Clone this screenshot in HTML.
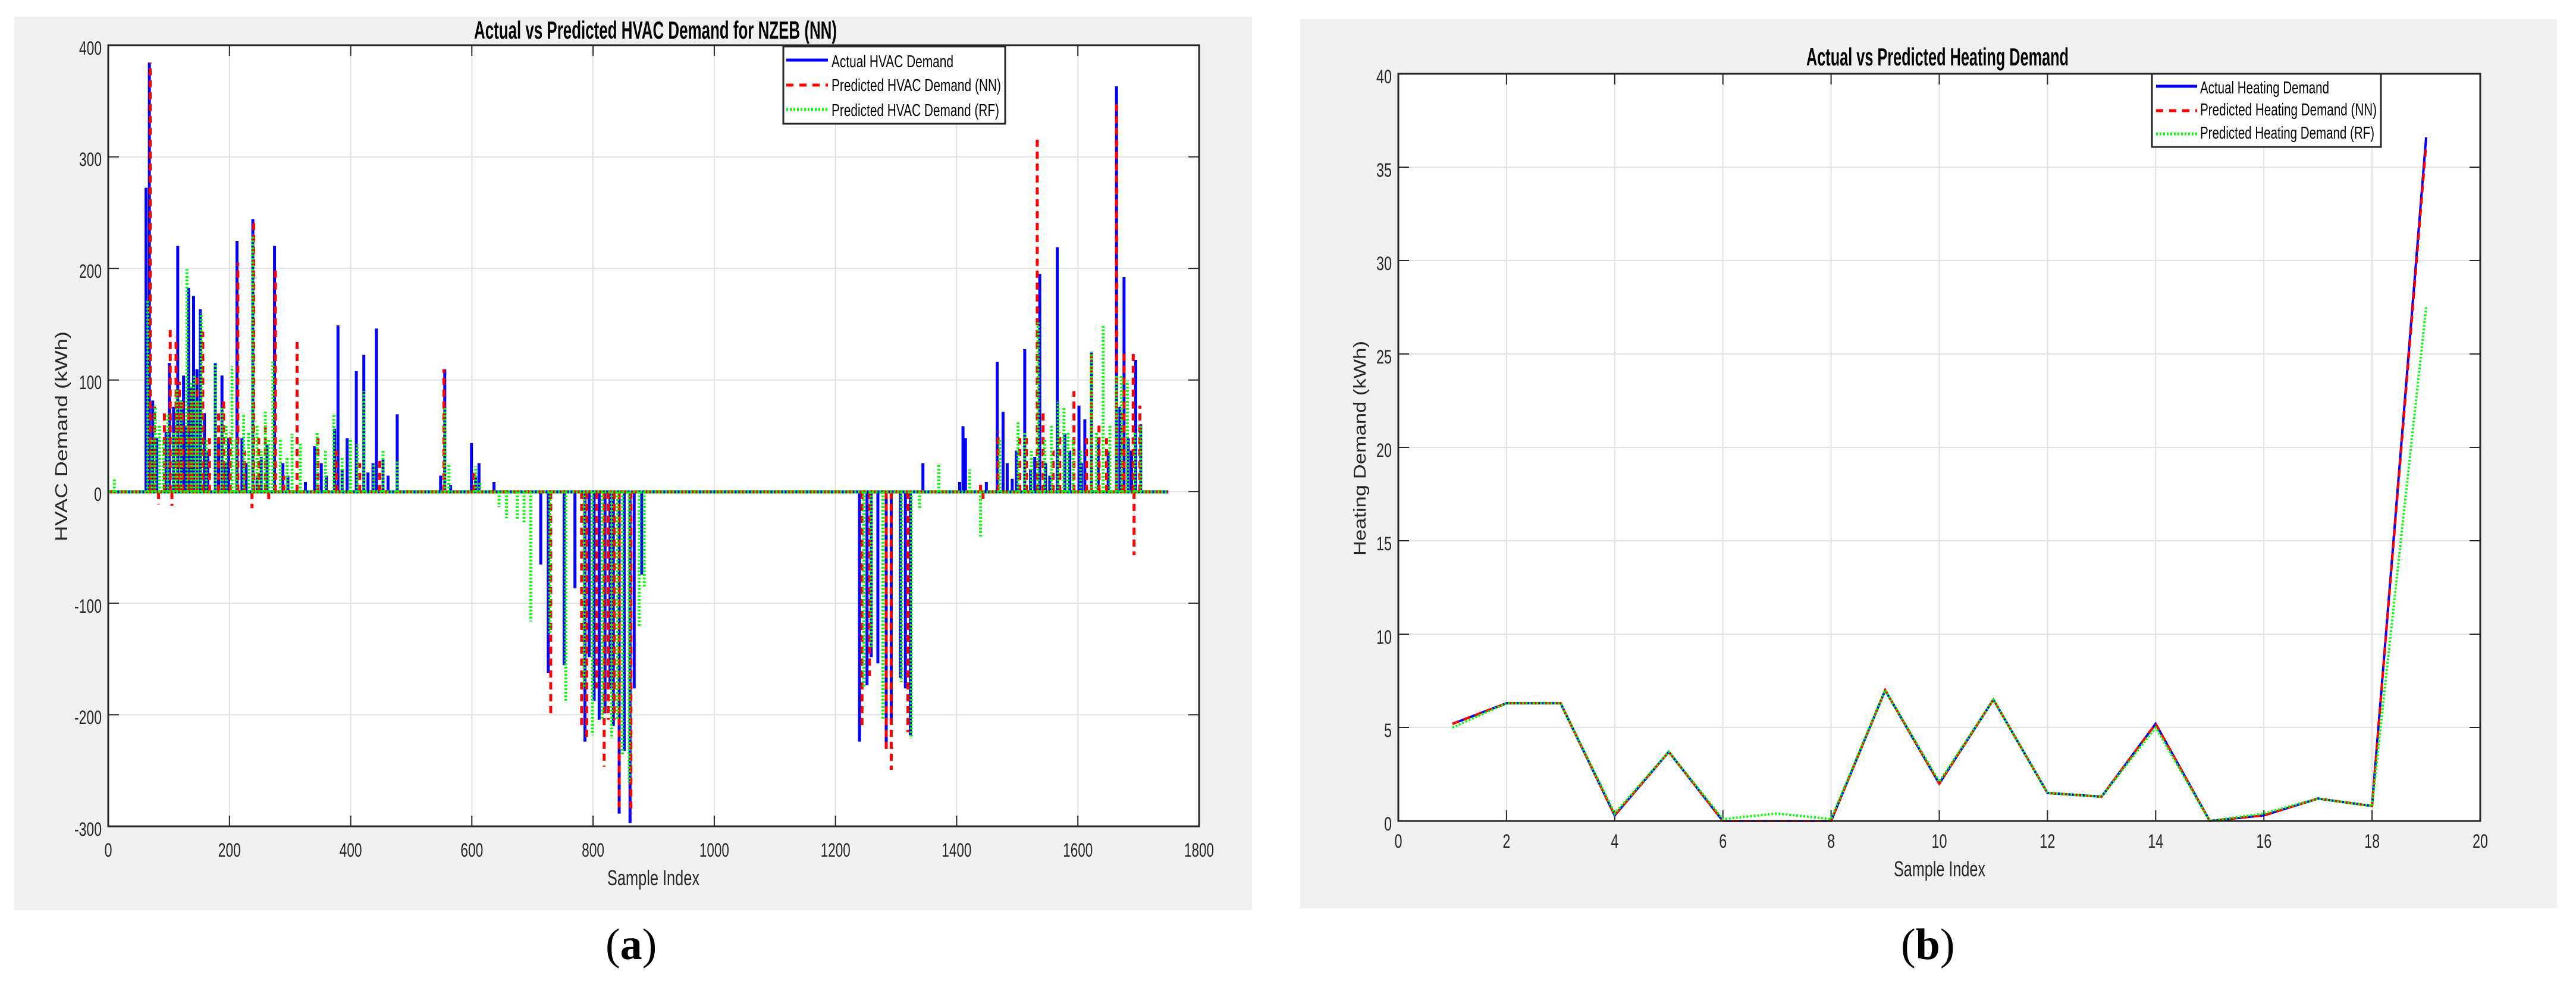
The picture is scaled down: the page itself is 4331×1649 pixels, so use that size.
<!DOCTYPE html>
<html><head><meta charset="utf-8"><style>
html,body{margin:0;padding:0;background:#fff;width:4331px;height:1649px;overflow:hidden}
svg{display:block}
text{font-family:"Liberation Sans",sans-serif;fill:#262626}
.t{font-size:32px}
.lg{font-size:29px;fill:#000}
.ti{font-size:42px;font-weight:bold;fill:#000}
.cap{font-family:"Liberation Serif",serif;font-size:74px;fill:#000}
</style></head><body>
<svg width="4331" height="1649" viewBox="0 0 4331 1649" xmlns="http://www.w3.org/2000/svg">
<!-- LEFT PANEL -->
<rect x="24" y="28" width="2081" height="1502" fill="#f0f0f0"/>
<rect x="182" y="76" width="1834" height="1313" fill="#fff"/>
<g stroke="#e2e2e2" stroke-width="2">
<path d="M385.8 76V1389M589.6 76V1389M793.3 76V1389M997.1 76V1389M1200.9 76V1389M1404.7 76V1389M1608.4 76V1389M1812.2 76V1389"/>
<path d="M182 263.6H2016M182 451.1H2016M182 638.7H2016M182 826.3H2016M182 1013.9H2016M182 1201.4H2016"/>
</g>
<g stroke="#262626" stroke-width="2">
<path d="M385.8 76v18M589.6 76v18M793.3 76v18M997.1 76v18M1200.9 76v18M1404.7 76v18M1608.4 76v18M1812.2 76v18"/>
<path d="M385.8 1389v-18M589.6 1389v-18M793.3 1389v-18M997.1 1389v-18M1200.9 1389v-18M1404.7 1389v-18M1608.4 1389v-18M1812.2 1389v-18"/>
<path d="M182 263.6h18M182 451.1h18M182 638.7h18M182 826.3h18M182 1013.9h18M182 1201.4h18"/>
<path d="M2016 263.6h-18M2016 451.1h-18M2016 638.7h-18M2016 826.3h-18M2016 1013.9h-18M2016 1201.4h-18"/>
</g>
<!-- left data (zoom coords) -->
<g transform="scale(1.403,1.052)" fill="none" stroke-linejoin="miter">
<path vector-effect="non-scaling-stroke" stroke="#0000ff" stroke-width="5" d="M130 786H1400
M175 786V300M179 786V100M213 786V393M226 786V460M232 786V473M240 786V494M258 786V580M266 786V600M284 786V385M303 786V350M329 786V393M405 786V520M427 786V593M436 786V567M451 786V525M476 786V662M533 786V590M565 786V708M574 786V740M1106 786V740M1154 786V681M1157 786V700M1195 786V578M1202 786V658M1213 786V765M1228 786V558M1246 786V438M1267 786V395M1276 786V693M1293 786V648M1300 786V670M1308 786V562M1338 786V138M1347 786V443M1361 786V575M1367 786V678M203 786V580M220 786V600M236 786V590M290 786V700M377 786V713M401 786V685M416 786V700M459 786V733
M183 786V640M188 786V700M199 786V690M208 786V650M217 786V640M222 786V680M229 786V620M245 786V660M249 786V720M262 786V700M270 786V740M274 786V700M295 786V740M308 786V760M313 786V730M320 786V710M339 786V740M345 786V760M366 786V770M385 786V740M391 786V760M410 786V750M441 786V755M447 786V740M465 786V760M528 786V760M540 786V775M570 786V760M592 786V770M1150 786V770M1182 786V770M1207 786V740M1218 786V720M1235 786V750M1240 786V730M1253 786V740M1258 786V760M1282 786V720M1296 786V740M1316 786V700M1328 786V720M1342 786V650M1352 786V700M1356 786V720
M648 786V902M657 786V1075M676 786V1063M689 786V940M701 786V1185M718 786V1150M742 786V1300M755 786V1315M769 786V918M1030 786V1185M1039 786V1095M1052 786V1060M1062 786V1195M1068 786V1155M1079 786V1083M1091 786V1175M712 786V1120M725 786V1140M735 786V1160M1044 786V1050M1085 786V1100M706 786V1050M731 786V1100M748 786V1200M760 786V1100"/>
<path vector-effect="non-scaling-stroke" stroke="#ff0000" stroke-width="5" stroke-dasharray="12 8" d="M130 786H1400
M180 786V100M204 786V520M211 786V538M243 786V530M285 786V420M304 786V355M330 786V425M356 786V545M532 786V590M1243 786V222M1338 786V165M1347 786V560M1287 786V625M1358 786V558M1366 786V648M215 786V610M230 786V620M268 786V640M318 786V680M1308 786V565M1196 786V690M1230 786V700
M185 786V650M197 786V660M219 786V640M226 786V650M236 786V600M251 786V700M262 786V660M276 786V690M293 786V720M310 786V700M340 786V760M381 786V700M403 786V720M431 786V740M455 786V730M568 786V750M1175 786V770M1222 786V700M1250 786V660M1262 786V720M1270 786V690M1302 786V700M1317 786V680M1326 786V700M1345 786V660
M190 786V806M206 786V808M302 786V812M322 786V800M660 786V1140M697 786V1165M724 786V1225M1068 786V1230M1359 786V887M1088 786V1170M1033 786V1160M729 786V1150M756 786V1300M742 786V1290M703 786V1180M1062 786V1200M1178 786V805M715 786V1100M736 786V1150M1042 786V1080"/>
<path vector-effect="non-scaling-stroke" stroke="#00ff00" stroke-width="5" stroke-dasharray="3 3" d="M130 786H1400
M137 786V765M177 786V480M186 786V648M224 786V430M241 786V500M258 786V580M278 786V585M303 786V375M318 786V655M327 786V575M336 786V700M350 786V693M360 786V708M400 786V660M436 786V625M476 786V735M533 786V650M1125 786V740M1220 786V672M1244 786V515M1268 786V642M1275 786V652M1308 786V562M1322 786V520M1344 786V600M1351 786V608M1367 786V680M196 786V700M212 786V620M233 786V600M292 786V660M313 786V720M420 786V700M448 786V740M570 786V745M1162 786V750M1286 786V700
M182 786V700M191 786V680M201 786V660M208 786V690M217 786V640M229 786V610M237 786V640M247 786V700M266 786V650M271 786V680M283 786V700M298 786V690M308 786V680M322 786V700M344 786V730M380 786V690M390 786V720M410 786V730M428 786V710M459 786V720M538 786V740M575 786V770M1198 786V700M1228 786V690M1236 786V720M1252 786V700M1260 786V680M1280 786V690M1295 786V720M1314 786V690M1330 786V680M1338 786V600M1360 786V690
M636 786V993M607 786V828M620 786V830M659 786V1012M678 786V1120M710 786V1175M733 786V1180M746 786V1205M772 786V938M1044 786V1035M1092 786V1180M1102 786V815M1175 786V860M598 786V810M628 786V835M722 786V1150M754 786V1250M1035 786V1100M1058 786V1150M1080 786V1090M700 786V1100M740 786V1150M766 786V1000"/>
</g>
<rect x="182" y="76" width="1834" height="1313" fill="none" stroke="#262626" stroke-width="3"/>
<!-- left legend -->
<rect x="1317" y="78" width="373" height="130" fill="#fff" stroke="#262626" stroke-width="3"/>
<path d="M1322 101H1392" stroke="#0000ff" stroke-width="5"/>
<path d="M1322 143H1392" stroke="#ff0000" stroke-width="5" stroke-dasharray="12 10"/>
<path d="M1322 184H1392" stroke="#00ff00" stroke-width="5" stroke-dasharray="3 3"/>
<text class="lg" x="1398" y="113" textLength="205" lengthAdjust="spacingAndGlyphs">Actual HVAC Demand</text>
<text class="lg" x="1398" y="153" textLength="285" lengthAdjust="spacingAndGlyphs">Predicted HVAC Demand (NN)</text>
<text class="lg" x="1398" y="195" textLength="282" lengthAdjust="spacingAndGlyphs">Predicted HVAC Demand (RF)</text>
<!-- left labels -->
<text class="ti" x="797" y="65" textLength="610" lengthAdjust="spacingAndGlyphs">Actual vs Predicted HVAC Demand for NZEB (NN)</text>
<g class="t" text-anchor="end">
<text x="171" y="92" textLength="38" lengthAdjust="spacingAndGlyphs">400</text>
<text x="171" y="279" textLength="38" lengthAdjust="spacingAndGlyphs">300</text>
<text x="171" y="467" textLength="38" lengthAdjust="spacingAndGlyphs">200</text>
<text x="171" y="654" textLength="38" lengthAdjust="spacingAndGlyphs">100</text>
<text x="171" y="842" textLength="13" lengthAdjust="spacingAndGlyphs">0</text>
<text x="171" y="1030" textLength="46" lengthAdjust="spacingAndGlyphs">-100</text>
<text x="171" y="1217" textLength="46" lengthAdjust="spacingAndGlyphs">-200</text>
<text x="171" y="1405" textLength="46" lengthAdjust="spacingAndGlyphs">-300</text>
</g>
<g class="t" text-anchor="middle">
<text x="182" y="1440" textLength="13" lengthAdjust="spacingAndGlyphs">0</text>
<text x="385.8" y="1440" textLength="38" lengthAdjust="spacingAndGlyphs">200</text>
<text x="589.6" y="1440" textLength="38" lengthAdjust="spacingAndGlyphs">400</text>
<text x="793.3" y="1440" textLength="38" lengthAdjust="spacingAndGlyphs">600</text>
<text x="997.1" y="1440" textLength="38" lengthAdjust="spacingAndGlyphs">800</text>
<text x="1200.9" y="1440" textLength="50" lengthAdjust="spacingAndGlyphs">1000</text>
<text x="1404.7" y="1440" textLength="50" lengthAdjust="spacingAndGlyphs">1200</text>
<text x="1608.4" y="1440" textLength="50" lengthAdjust="spacingAndGlyphs">1400</text>
<text x="1812.2" y="1440" textLength="50" lengthAdjust="spacingAndGlyphs">1600</text>
<text x="2016" y="1440" textLength="50" lengthAdjust="spacingAndGlyphs">1800</text>
</g>
<text x="1021" y="1488" style="font-size:36px" textLength="155" lengthAdjust="spacingAndGlyphs">Sample Index</text>
<text transform="translate(113,910) rotate(-90)" style="font-size:29px" textLength="353" lengthAdjust="spacingAndGlyphs">HVAC Demand (kWh)</text>
<text class="cap" x="1018" y="1612">(<tspan font-weight="bold">a</tspan>)</text>

<!-- RIGHT PANEL -->
<rect x="2186" y="32" width="2113" height="1495" fill="#f0f0f0"/>
<rect x="2351" y="124" width="1819" height="1256" fill="#fff"/>
<g stroke="#e2e2e2" stroke-width="2">
<path d="M2532.9 124V1380M2714.8 124V1380M2896.7 124V1380M3078.6 124V1380M3260.5 124V1380M3442.4 124V1380M3624.3 124V1380M3806.2 124V1380M3988.1 124V1380"/>
<path d="M2351 281H4170M2351 438H4170M2351 595H4170M2351 752H4170M2351 909H4170M2351 1066H4170M2351 1223H4170"/>
</g>
<g stroke="#262626" stroke-width="2">
<path d="M2532.9 124v18M2714.8 124v18M2896.7 124v18M3078.6 124v18M3260.5 124v18M3442.4 124v18M3624.3 124v18M3806.2 124v18M3988.1 124v18"/>
<path d="M2532.9 1380v-18M2714.8 1380v-18M2896.7 1380v-18M3078.6 1380v-18M3260.5 1380v-18M3442.4 1380v-18M3624.3 1380v-18M3806.2 1380v-18M3988.1 1380v-18"/>
<path d="M2351 281h18M2351 438h18M2351 595h18M2351 752h18M2351 909h18M2351 1066h18M2351 1223h18"/>
<path d="M4170 281h-18M4170 438h-18M4170 595h-18M4170 752h-18M4170 909h-18M4170 1066h-18M4170 1223h-18"/>
</g>
<g transform="translate(2351,1380) scale(90.95,-31.4)" fill="none">
<polyline vector-effect="non-scaling-stroke" stroke="#0000ff" stroke-width="4" points="1,5.2 2,6.3 3,6.3 4,0.3 5,3.7 6,0 7,0 8,0 9,7.0 10,2.0 11,6.5 12,1.5 13,1.3 14,5.2 15,0 16,0.3 17,1.2 18,0.8 19,36.6"/>
<polyline vector-effect="non-scaling-stroke" stroke="#ff0000" stroke-width="4" stroke-dasharray="12 8" points="1,5.2 2,6.3 3,6.3 4,0.3 5,3.7 6,0 7,0 8,0 9,7.0 10,2.0 11,6.5 12,1.5 13,1.3 14,5.2 15,0 16,0.3 17,1.2 18,0.8 19,36.2"/>
<polyline vector-effect="non-scaling-stroke" stroke="#00ff00" stroke-width="4" stroke-dasharray="3 3" points="1,5.0 2,6.3 3,6.3 4,0.4 5,3.7 6,0.1 7,0.4 8,0.1 9,7.0 10,2.1 11,6.5 12,1.5 13,1.3 14,5.0 15,0 16,0.4 17,1.2 18,0.8 19,27.5"/>
</g>
<rect x="2351" y="124" width="1819" height="1256" fill="none" stroke="#262626" stroke-width="3"/>
<rect x="3618" y="124" width="385" height="123" fill="#fff" stroke="#262626" stroke-width="3"/>
<path d="M3625 145H3694" stroke="#0000ff" stroke-width="5"/>
<path d="M3625 186H3694" stroke="#ff0000" stroke-width="5" stroke-dasharray="12 10"/>
<path d="M3625 225H3694" stroke="#00ff00" stroke-width="5" stroke-dasharray="3 3"/>
<text class="lg" x="3699" y="157" textLength="217" lengthAdjust="spacingAndGlyphs">Actual Heating Demand</text>
<text class="lg" x="3699" y="194" textLength="297" lengthAdjust="spacingAndGlyphs">Predicted Heating Demand (NN)</text>
<text class="lg" x="3699" y="233" textLength="293" lengthAdjust="spacingAndGlyphs">Predicted Heating Demand (RF)</text>
<text class="ti" x="3037" y="110" textLength="441" lengthAdjust="spacingAndGlyphs">Actual vs Predicted Heating Demand</text>
<g class="t" text-anchor="end">
<text x="2340" y="140" textLength="26" lengthAdjust="spacingAndGlyphs">40</text>
<text x="2340" y="297" textLength="26" lengthAdjust="spacingAndGlyphs">35</text>
<text x="2340" y="454" textLength="26" lengthAdjust="spacingAndGlyphs">30</text>
<text x="2340" y="611" textLength="26" lengthAdjust="spacingAndGlyphs">25</text>
<text x="2340" y="768" textLength="26" lengthAdjust="spacingAndGlyphs">20</text>
<text x="2340" y="925" textLength="26" lengthAdjust="spacingAndGlyphs">15</text>
<text x="2340" y="1082" textLength="26" lengthAdjust="spacingAndGlyphs">10</text>
<text x="2340" y="1239" textLength="13" lengthAdjust="spacingAndGlyphs">5</text>
<text x="2340" y="1396" textLength="13" lengthAdjust="spacingAndGlyphs">0</text>
</g>
<g class="t" text-anchor="middle">
<text x="2351" y="1425" textLength="13" lengthAdjust="spacingAndGlyphs">0</text>
<text x="2532.9" y="1425" textLength="13" lengthAdjust="spacingAndGlyphs">2</text>
<text x="2714.8" y="1425" textLength="13" lengthAdjust="spacingAndGlyphs">4</text>
<text x="2896.7" y="1425" textLength="13" lengthAdjust="spacingAndGlyphs">6</text>
<text x="3078.6" y="1425" textLength="13" lengthAdjust="spacingAndGlyphs">8</text>
<text x="3260.5" y="1425" textLength="26" lengthAdjust="spacingAndGlyphs">10</text>
<text x="3442.4" y="1425" textLength="26" lengthAdjust="spacingAndGlyphs">12</text>
<text x="3624.3" y="1425" textLength="26" lengthAdjust="spacingAndGlyphs">14</text>
<text x="3806.2" y="1425" textLength="26" lengthAdjust="spacingAndGlyphs">16</text>
<text x="3988.1" y="1425" textLength="26" lengthAdjust="spacingAndGlyphs">18</text>
<text x="4170" y="1425" textLength="26" lengthAdjust="spacingAndGlyphs">20</text>
</g>
<text x="3184" y="1473" style="font-size:36px" textLength="154" lengthAdjust="spacingAndGlyphs">Sample Index</text>
<text transform="translate(2296,934) rotate(-90)" style="font-size:29px" textLength="361" lengthAdjust="spacingAndGlyphs">Heating Demand (kWh)</text>
<text class="cap" x="3196" y="1612">(<tspan font-weight="bold">b</tspan>)</text>
</svg>
</body></html>
